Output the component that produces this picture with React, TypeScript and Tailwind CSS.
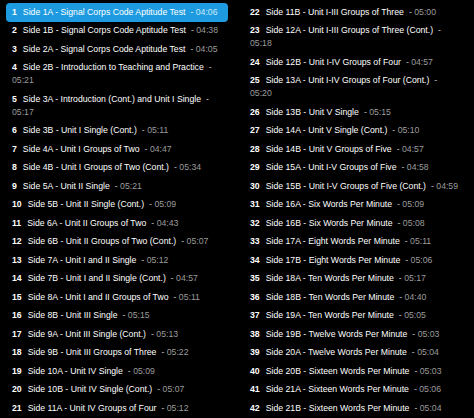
import { useState } from 'react';

interface Track {
  id: number;
  title: string;
  duration: string;
}

const tracks: Track[] = [
  { id: 1, title: "Side 1A - Signal Corps Code Aptitude Test", duration: "04:06" },
  { id: 2, title: "Side 1B - Signal Corps Code Aptitude Test", duration: "04:38" },
  { id: 3, title: "Side 2A - Signal Corps Code Aptitude Test", duration: "04:05" },
  { id: 4, title: "Side 2B - Introduction to Teaching and Practice", duration: "05:21" },
  { id: 5, title: "Side 3A - Introduction (Cont.) and Unit I Single", duration: "05:17" },
  { id: 6, title: "Side 3B - Unit I Single (Cont.)", duration: "05:11" },
  { id: 7, title: "Side 4A - Unit I Groups of Two", duration: "04:47" },
  { id: 8, title: "Side 4B - Unit I Groups of Two (Cont.)", duration: "05:34" },
  { id: 9, title: "Side 5A - Unit II Single", duration: "05:21" },
  { id: 10, title: "Side 5B - Unit II Single (Cont.)", duration: "05:09" },
  { id: 11, title: "Side 6A - Unit II Groups of Two", duration: "04:43" },
  { id: 12, title: "Side 6B - Unit II Groups of Two (Cont.)", duration: "05:07" },
  { id: 13, title: "Side 7A - Unit I and II Single", duration: "05:12" },
  { id: 14, title: "Side 7B - Unit I and II Single (Cont.)", duration: "04:57" },
  { id: 15, title: "Side 8A - Unit I and II Groups of Two", duration: "05:11" },
  { id: 16, title: "Side 8B - Unit III Single", duration: "05:15" },
  { id: 17, title: "Side 9A - Unit III Single (Cont.)", duration: "05:13" },
  { id: 18, title: "Side 9B - Unit III Groups of Three", duration: "05:22" },
  { id: 19, title: "Side 10A - Unit IV Single", duration: "05:09" },
  { id: 20, title: "Side 10B - Unit IV Single (Cont.)", duration: "05:07" },
  { id: 21, title: "Side 11A - Unit IV Groups of Four", duration: "05:12" },
  { id: 22, title: "Side 11B - Unit I-III Groups of Three", duration: "05:00" },
  { id: 23, title: "Side 12A - Unit I-III Groups of Three (Cont.)", duration: "05:18" },
  { id: 24, title: "Side 12B - Unit I-IV Groups of Four", duration: "04:57" },
  { id: 25, title: "Side 13A - Unit I-IV Groups of Four (Cont.)", duration: "05:20" },
  { id: 26, title: "Side 13B - Unit V Single", duration: "05:15" },
  { id: 27, title: "Side 14A - Unit V Single (Cont.)", duration: "05:10" },
  { id: 28, title: "Side 14B - Unit V Groups of Five", duration: "04:57" },
  { id: 29, title: "Side 15A - Unit I-V Groups of Five", duration: "04:58" },
  { id: 30, title: "Side 15B - Unit I-V Groups of Five (Cont.)", duration: "04:59" },
  { id: 31, title: "Side 16A - Six Words Per Minute", duration: "05:09" },
  { id: 32, title: "Side 16B - Six Words Per Minute", duration: "05:08" },
  { id: 33, title: "Side 17A - Eight Words Per Minute", duration: "05:11" },
  { id: 34, title: "Side 17B - Eight Words Per Minute", duration: "05:06" },
  { id: 35, title: "Side 18A - Ten Words Per Minute", duration: "05:17" },
  { id: 36, title: "Side 18B - Ten Words Per Minute", duration: "04:40" },
  { id: 37, title: "Side 19A - Ten Words Per Minute", duration: "05:05" },
  { id: 38, title: "Side 19B - Twelve Words Per Minute", duration: "05:03" },
  { id: 39, title: "Side 20A - Twelve Words Per Minute", duration: "05:04" },
  { id: 40, title: "Side 20B - Sixteen Words Per Minute", duration: "05:03" },
  { id: 41, title: "Side 21A - Sixteen Words Per Minute", duration: "05:06" },
  { id: 42, title: "Side 21B - Sixteen Words Per Minute", duration: "05:04" },
];

const TrackRow = ({ track, active }: { track: Track; active: boolean }) => (
  <li
    className={`px-[6px] py-[2.75px] leading-[13px] rounded-[4px] ${
      active ? "bg-[#1e9be0]" : ""
    }`}
  >
    <span className="font-bold text-white mr-[6px]">{track.id}</span>
    <span className="text-white">{track.title}</span>
    <span className={`ml-[5px] ${active ? "text-[#e4f3fb]" : "text-[#c4c4c4]"}`}>-</span>{" "}
    <span className={active ? "text-[#cde9f8]" : "text-[#9c9c9c]"}>{track.duration}</span>
  </li>
);

export default function App() {
  const [current] = useState(1);
  const left = tracks.slice(0, 21);
  const right = tracks.slice(21);

  return (
    <div
      className="w-[474px] h-[418px] bg-black text-[8.7px] overflow-hidden"
      style={{ fontFamily: '"Liberation Sans", Arial, sans-serif' }}
    >
      <div className="grid grid-cols-[222px_222px] gap-x-[16px] pl-[6px] pt-[3px]">
        <ul>
          {left.map((t) => (
            <TrackRow key={t.id} track={t} active={t.id === current} />
          ))}
        </ul>
        <ul>
          {right.map((t) => (
            <TrackRow key={t.id} track={t} active={t.id === current} />
          ))}
        </ul>
      </div>
    </div>
  );
}
